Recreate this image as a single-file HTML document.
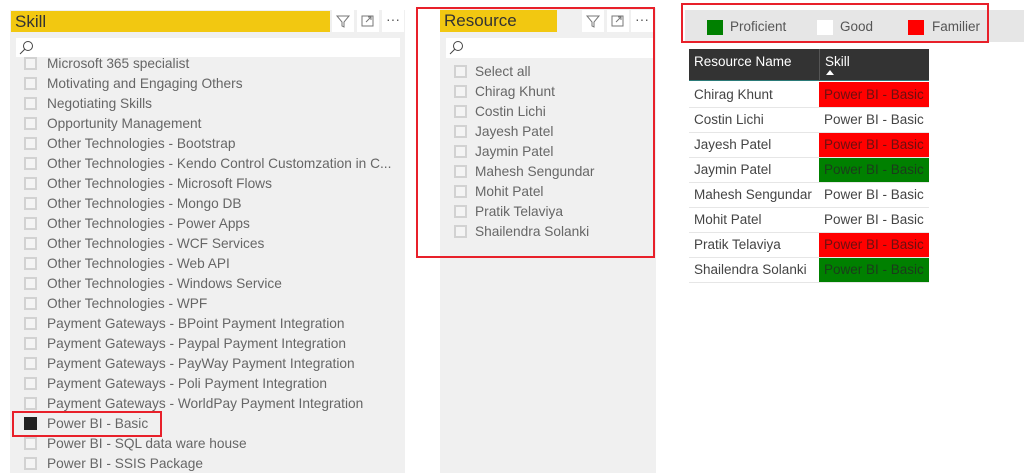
<!DOCTYPE html>
<html><head><meta charset="utf-8"><style>
*{margin:0;padding:0;box-sizing:border-box}
body{width:1024px;height:473px;background:#fff;font-family:"Liberation Sans",sans-serif;position:relative;overflow:hidden;color:#666}
.abs{position:absolute}
.panel{background:#f0f0f0}
.hdr{background:#f2c811;color:#333;font-size:17px;line-height:22px;padding-left:4px}
.ib{background:#fff;width:22px;height:22px}
.search{background:#fff}
.item{position:absolute;font-size:13.7px;line-height:20px;white-space:nowrap;color:#666}
.item i{position:absolute;left:0;top:3px;width:13px;height:13px;border:2px solid #d2d2d2;background:#f4f4f4}
.red{border:2px solid #e8202a}
table{border-collapse:collapse;font-size:13.5px;color:#444}
td{height:25px;padding-left:5px;border-bottom:1px solid #e6e6e6;white-space:nowrap}
.r{background:#f00;color:#6a1010}.g{background:#008000;color:#1b3b1b}
</style></head><body>
<div class="abs panel" style="left:10px;top:10px;width:395px;height:463px"></div>
<div class="abs hdr" style="left:11px;top:11px;width:319px;height:21px">Skill</div>
<div class="abs ib" style="left:332px;top:10px"><svg width="22" height="22"><path d="M5 6h12l-5 6v5l-2-1v-4z" fill="none" stroke="#777" stroke-width="1"/></svg></div>
<div class="abs ib" style="left:357px;top:10px"><svg width="22" height="22"><rect x="5" y="6" width="11" height="10" fill="none" stroke="#777"/><path d="M9 12l5-5M11 7h3v3" fill="none" stroke="#777"/></svg></div>
<div class="abs ib" style="left:382px;top:10px;font-size:14px;text-align:center;line-height:18px;color:#555">···</div>
<div class="abs search" style="left:16px;top:38px;width:384px;height:19px"><svg width="20" height="19"><circle cx="12" cy="8" r="4.5" fill="none" stroke="#444"/><path d="M9 11l-5 5" stroke="#444"/></svg></div>
<div class="abs red" style="left:12px;top:411px;width:150px;height:26px"></div>
<div class="abs panel" style="left:440px;top:8px;width:216px;height:465px"></div>
<div class="abs hdr" style="left:440px;top:10px;width:117px;height:22px">Resource</div>
<div class="abs ib" style="left:582px;top:10px;width:22px"><svg width="22" height="22"><path d="M5 6h12l-5 6v5l-2-1v-4z" fill="none" stroke="#777"/></svg></div>
<div class="abs ib" style="left:607px;top:10px;width:22px"><svg width="22" height="22"><rect x="5" y="6" width="11" height="10" fill="none" stroke="#777"/><path d="M9 12l5-5M11 7h3v3" fill="none" stroke="#777"/></svg></div>
<div class="abs ib" style="left:631px;top:10px;width:22px;font-size:14px;text-align:center;line-height:18px;color:#555">···</div>
<div class="abs search" style="left:446px;top:38px;width:207px;height:20px"><svg width="20" height="20"><circle cx="12" cy="8" r="4.5" fill="none" stroke="#444"/><path d="M9 11l-5 5" stroke="#444"/></svg></div>
<div class="abs red" style="left:416px;top:7px;width:239px;height:251px"></div>
<div class="abs" style="left:685px;top:10px;width:339px;height:32px;background:#e6e6e6"></div>
<div class="abs" style="left:707px;top:20px;width:16px;height:15px;background:#008000"></div>
<div class="abs" style="left:730px;top:18px;font-size:13.5px;line-height:18px;color:#555">Proficient</div>
<div class="abs" style="left:817px;top:20px;width:16px;height:15px;background:#fff"></div>
<div class="abs" style="left:840px;top:18px;font-size:13.5px;line-height:18px;color:#555">Good</div>
<div class="abs" style="left:908px;top:20px;width:16px;height:15px;background:#f00"></div>
<div class="abs" style="left:932px;top:18px;font-size:13.5px;line-height:18px;color:#555">Familier</div>
<div class="abs red" style="left:681px;top:3px;width:308px;height:40px"></div>
<div class="abs" style="left:689px;top:49px;width:240px;height:32px;background:#333;border-bottom:1px solid #2a7a78"></div>
<div class="abs" style="left:694px;top:54px;color:#fff;font-size:13.5px">Resource Name</div>
<div class="abs" style="left:819px;top:49px;width:1px;height:32px;background:#555"></div>
<div class="abs" style="left:825px;top:54px;color:#fff;font-size:13.5px">Skill</div>
<div class="abs" style="left:826px;top:70px;width:0;height:0;border-left:4px solid transparent;border-right:4px solid transparent;border-bottom:5px solid #fff"></div>
<table class="abs" style="left:689px;top:82px;width:240px">
<tr><td style="width:130px">Chirag Khunt</td><td class="r">Power BI - Basic</td></tr>
<tr><td>Costin Lichi</td><td>Power BI - Basic</td></tr>
<tr><td>Jayesh Patel</td><td class="r">Power BI - Basic</td></tr>
<tr><td>Jaymin Patel</td><td class="g">Power BI - Basic</td></tr>
<tr><td>Mahesh Sengundar</td><td>Power BI - Basic</td></tr>
<tr><td>Mohit Patel</td><td>Power BI - Basic</td></tr>
<tr><td>Pratik Telaviya</td><td class="r">Power BI - Basic</td></tr>
<tr><td>Shailendra Solanki</td><td class="g">Power BI - Basic</td></tr>
</table>
<div class="item" style="left:24px;top:54px"><i></i><span style="padding-left:23px">Microsoft 365 specialist</span></div>
<div class="item" style="left:24px;top:74px"><i></i><span style="padding-left:23px">Motivating and Engaging Others</span></div>
<div class="item" style="left:24px;top:94px"><i></i><span style="padding-left:23px">Negotiating Skills</span></div>
<div class="item" style="left:24px;top:114px"><i></i><span style="padding-left:23px">Opportunity Management</span></div>
<div class="item" style="left:24px;top:134px"><i></i><span style="padding-left:23px">Other Technologies - Bootstrap</span></div>
<div class="item" style="left:24px;top:154px"><i></i><span style="padding-left:23px">Other Technologies - Kendo Control Customzation in C...</span></div>
<div class="item" style="left:24px;top:174px"><i></i><span style="padding-left:23px">Other Technologies - Microsoft Flows</span></div>
<div class="item" style="left:24px;top:194px"><i></i><span style="padding-left:23px">Other Technologies - Mongo DB</span></div>
<div class="item" style="left:24px;top:214px"><i></i><span style="padding-left:23px">Other Technologies - Power Apps</span></div>
<div class="item" style="left:24px;top:234px"><i></i><span style="padding-left:23px">Other Technologies - WCF Services</span></div>
<div class="item" style="left:24px;top:254px"><i></i><span style="padding-left:23px">Other Technologies - Web API</span></div>
<div class="item" style="left:24px;top:274px"><i></i><span style="padding-left:23px">Other Technologies - Windows Service</span></div>
<div class="item" style="left:24px;top:294px"><i></i><span style="padding-left:23px">Other Technologies - WPF</span></div>
<div class="item" style="left:24px;top:314px"><i></i><span style="padding-left:23px">Payment Gateways - BPoint Payment Integration</span></div>
<div class="item" style="left:24px;top:334px"><i></i><span style="padding-left:23px">Payment Gateways - Paypal Payment Integration</span></div>
<div class="item" style="left:24px;top:354px"><i></i><span style="padding-left:23px">Payment Gateways - PayWay Payment Integration</span></div>
<div class="item" style="left:24px;top:374px"><i></i><span style="padding-left:23px">Payment Gateways - Poli Payment Integration</span></div>
<div class="item" style="left:24px;top:394px"><i></i><span style="padding-left:23px">Payment Gateways - WorldPay Payment Integration</span></div>
<div class="item" style="left:24px;top:414px"><i style="background:#222;border-color:#222"></i><span style="padding-left:23px">Power BI - Basic</span></div>
<div class="item" style="left:24px;top:434px"><i></i><span style="padding-left:23px">Power BI - SQL data ware house</span></div>
<div class="item" style="left:24px;top:454px"><i></i><span style="padding-left:23px">Power BI - SSIS Package</span></div>
<div class="item" style="left:454px;top:62px"><i></i><span style="padding-left:21px">Select all</span></div>
<div class="item" style="left:454px;top:82px"><i></i><span style="padding-left:21px">Chirag Khunt</span></div>
<div class="item" style="left:454px;top:102px"><i></i><span style="padding-left:21px">Costin Lichi</span></div>
<div class="item" style="left:454px;top:122px"><i></i><span style="padding-left:21px">Jayesh Patel</span></div>
<div class="item" style="left:454px;top:142px"><i></i><span style="padding-left:21px">Jaymin Patel</span></div>
<div class="item" style="left:454px;top:162px"><i></i><span style="padding-left:21px">Mahesh Sengundar</span></div>
<div class="item" style="left:454px;top:182px"><i></i><span style="padding-left:21px">Mohit Patel</span></div>
<div class="item" style="left:454px;top:202px"><i></i><span style="padding-left:21px">Pratik Telaviya</span></div>
<div class="item" style="left:454px;top:222px"><i></i><span style="padding-left:21px">Shailendra Solanki</span></div>
</body></html>
